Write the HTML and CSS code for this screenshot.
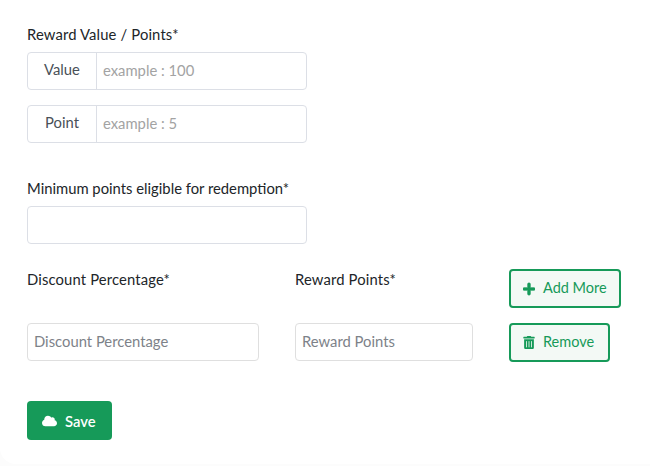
FILE: index.html
```html
<!DOCTYPE html>
<html lang="en">
<head>
  <meta charset="UTF-8">
  <meta name="viewport" content="width=device-width, initial-scale=1.0">
  <title>Reward Settings</title>
  <link rel="stylesheet" href="styles.css">
</head>
<body>
  <form class="card">
    <label class="label">Reward Value / Points*</label>
    <div class="input-group">
      <span class="addon">Value</span>
      <input class="group-input" type="text" placeholder="example : 100">
    </div>
    <div class="input-group">
      <span class="addon">Point</span>
      <input class="group-input" type="text" placeholder="example : 5">
    </div>

    <label class="label label-min">Minimum points eligible for redemption*</label>
    <input class="input input-min" type="text">

    <div class="rewards">
      <label class="label label-row">Discount Percentage*</label>
      <label class="label label-row">Reward Points*</label>
      <div>
        <button class="btn-outline" type="button">
          <svg class="icon icon-plus" viewBox="0 0 448 512"><path d="M416 208H272V64c0-17.700-14.300-32-32-32h-32c-17.700 0-32 14.300-32 32v144H32c-17.700 0-32 14.300-32 32v32c0 17.700 14.300 32 32 32h144v144c0 17.700 14.300 32 32 32h32c17.700 0 32-14.300 32-32V304h144c17.700 0 32-14.300 32-32v-32c0-17.700-14.300-32-32-32z"/></svg>
          Add More
        </button>
      </div>
      <input class="input" type="text" placeholder="Discount Percentage">
      <input class="input" type="text" placeholder="Reward Points">
      <div>
        <button class="btn-outline" type="button">
          <svg class="icon icon-trash" viewBox="0 0 448 512"><path d="M32 464a48 48 0 0 0 48 48h288a48 48 0 0 0 48-48V128H32zm272-256a16 16 0 0 1 32 0v224a16 16 0 0 1-32 0zm-96 0a16 16 0 0 1 32 0v224a16 16 0 0 1-32 0zm-96 0a16 16 0 0 1 32 0v224a16 16 0 0 1-32 0zM432 32H312l-9.400-18.700A24 24 0 0 0 281.100 0H166.800a23.700 23.700 0 0 0-21.400 13.300L136 32H16A16 16 0 0 0 0 48v32a16 16 0 0 0 16 16h416a16 16 0 0 0 16-16V48a16 16 0 0 0-16-16z"/></svg>
          Remove
        </button>
      </div>
    </div>

    <button class="btn-save" type="button">
      <svg class="icon-cloud" viewBox="0 0 640 512"><path d="M537.600 226.600c4.100-10.700 6.400-22.400 6.400-34.600 0-53-43-96-96-96-19.700 0-38.100 6-53.300 16.200C367 64.200 315.300 32 256 32c-88.400 0-160 71.600-160 160 0 2.700.1 5.400.2 8.100C40.200 219.800 0 273.200 0 336c0 79.500 64.500 144 144 144h368c70.700 0 128-57.300 128-128 0-61.900-44-113.600-102.400-125.400z"/></svg>
      Save
    </button>
  </form>
</body>
</html>
```

FILE: styles.css
```css
body {
  margin: 0;
  background-color: #fcfcfc;
  font-family: "Lato", "Liberation Sans", sans-serif;
  font-size: 14.8px;
  color: #212529;
}
.card {
  display: block;
  box-sizing: border-box;
  width: 650px;
  height: 464px;
  padding: 25px 27px 0;
  background-color: #ffffff;
  border-radius: 0 0 0 16px;
}
.label {
  display: block;
  height: 19px;
  line-height: 19px;
  letter-spacing: 0.14px;
}
.label-min {
  margin-top: 36px;
  letter-spacing: 0;
}
.label-row {
  padding-top: 1px;
}
.input-group {
  display: flex;
  box-sizing: border-box;
  width: 280px;
  height: 38px;
  margin-top: 8px;
  margin-bottom: 15px;
  border: 1px solid #dcdfe6;
  border-radius: 4px;
}
.addon {
  box-sizing: border-box;
  width: 69px;
  padding-bottom: 3px;
  line-height: 33px;
  text-align: center;
  color: #495057;
  border-right: 1px solid #dcdfe6;
}
.group-input, .input {
  box-sizing: border-box;
  font: inherit;
  color: #495057;
  outline: none;
}
.group-input {
  flex: 1;
  min-width: 0;
  padding: 0 6px 2px;
  border: none;
  background: none;
}
.group-input::placeholder {
  color: #a3a3a3;
}
.input {
  width: 100%;
  height: 38px;
  padding: 0 6px 2px;
  border: 1px solid #dfdfdf;
  border-radius: 4px;
}
.input::placeholder {
  color: #7d8289;
}
.input-min {
  display: block;
  width: 280px;
  margin-top: 8px;
  border-color: #dcdfe6;
}
.rewards {
  display: grid;
  grid-template-columns: 232px 178px auto;
  column-gap: 36px;
  row-gap: 15px;
  margin-top: 25px;
}
.btn-outline {
  display: inline-flex;
  align-items: center;
  gap: 8px;
  box-sizing: border-box;
  min-width: 101px;
  height: 39px;
  padding: 0 12px 2px 12px;
  font: inherit;
  font-size: 14.5px;
  color: #169a59;
  background-color: #f3f9f5;
  border: 2px solid #169a59;
  border-radius: 4px;
  cursor: pointer;
}
.icon {
  width: 12px;
  height: 14px;
  margin-top: 2px;
  fill: currentColor;
}
.icon-plus {
  stroke: currentColor;
  stroke-width: 26;
}
.icon-trash {
  height: 13px;
}
.btn-save {
  display: flex;
  align-items: center;
  gap: 8px;
  height: 39px;
  margin-top: 39px;
  padding: 0 16px 0 15px;
  font: inherit;
  font-weight: 600;
  color: #ffffff;
  background-color: #169a59;
  border: none;
  border-radius: 4px;
  cursor: pointer;
}
.icon-cloud {
  width: 15px;
  height: 12px;
  fill: currentColor;
}
```
